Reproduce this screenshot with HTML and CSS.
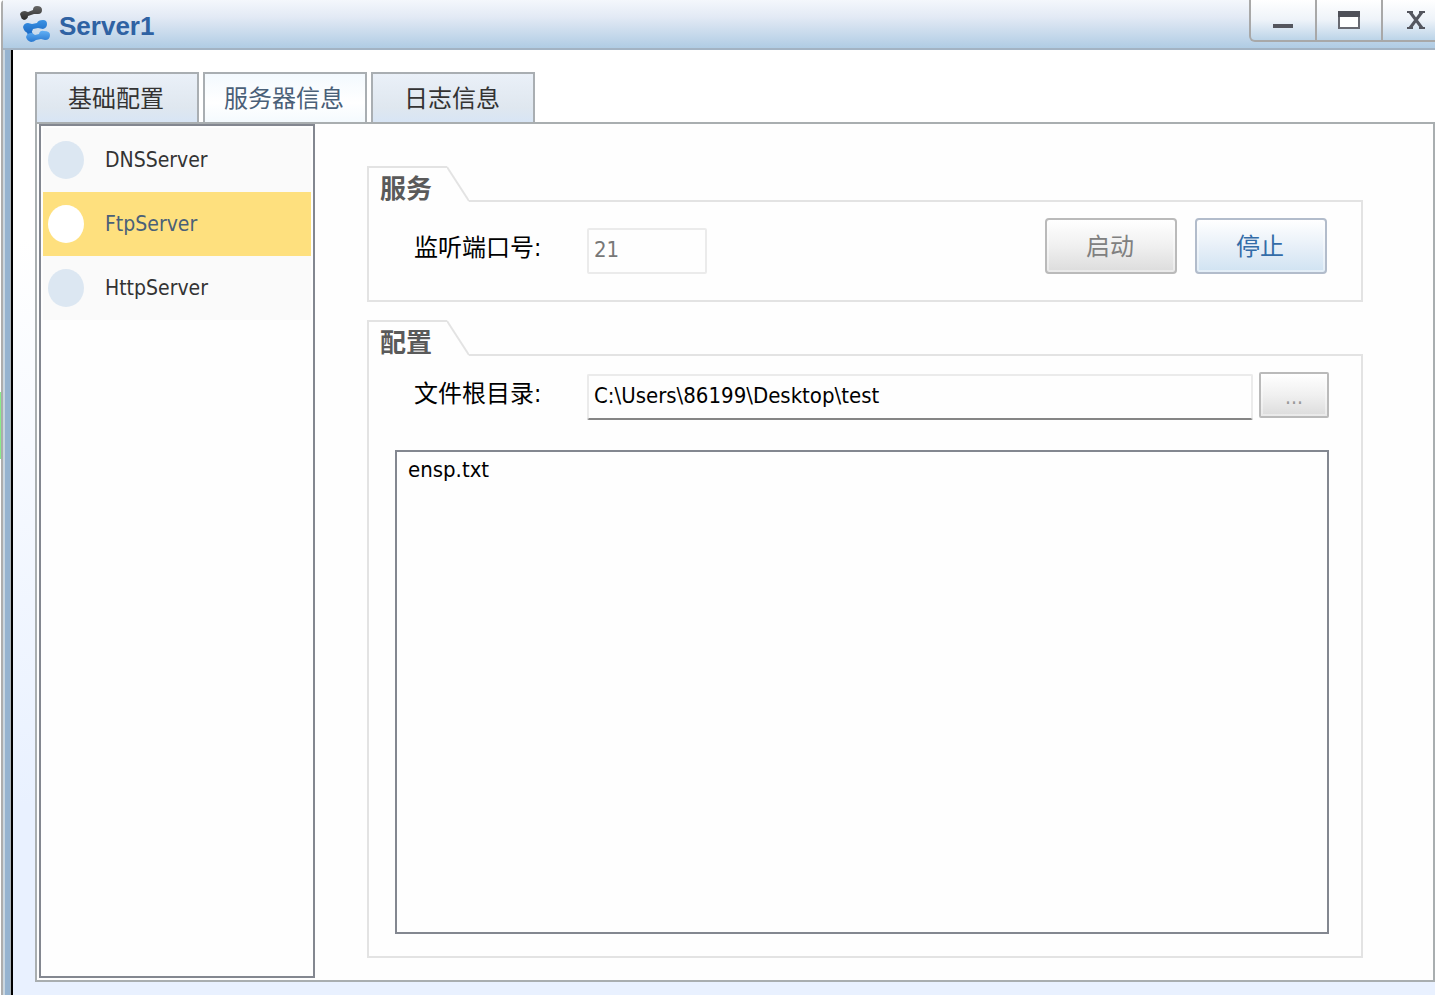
FILE: index.html
```html
<!DOCTYPE html>
<html lang="zh-CN">
<head>
<meta charset="UTF-8">
<meta name="viewport" content="width=device-width, initial-scale=1.0">
<title>Server1</title>
<link rel="stylesheet" href="styles.css">
</head>
<body>
<div class="window">
    <header class="titlebar">
        <svg class="logo" width="32" height="38" viewBox="0 0 32 38" aria-hidden="true">
            <defs>
                <linearGradient id="dark" x1="0" y1="0" x2="0" y2="1">
                    <stop offset="0" stop-color="#686868"/>
                    <stop offset="1" stop-color="#2a2a2a"/>
                </linearGradient>
                <linearGradient id="blue" x1="0" y1="0" x2="0" y2="1">
                    <stop offset="0" stop-color="#3a92e4"/>
                    <stop offset="1" stop-color="#1d6cc6"/>
                </linearGradient>
                <linearGradient id="light" x1="0" y1="0" x2="0" y2="1">
                    <stop offset="0" stop-color="#62b0f5"/>
                    <stop offset="1" stop-color="#2878d0"/>
                </linearGradient>
            </defs>
            <path d="M0 9 Q1 6 5 6 L8 7 L13 5 Q13 1 17 1 Q22 1 22 5 Q22 9 18 9 L14 9 L8 11 Q8 14 4 15 Q1 14 1 12 Z" fill="url(#dark)"/>
            <path d="M9 25 L11 33" stroke="#2273cf" stroke-width="5"/>
            <path d="M3 22 Q4 18 8 18 L12 19 L17 18 Q18 15 23 15 Q27 15 27 19 Q27 23 23 24 L18 23 L13 24 Q12 28 8 28 Q4 27 3 22 Z" fill="url(#blue)"/>
            <path d="M6 32 Q7 28 12 28 L15 30 L19 29 Q20 25 24 26 Q30 26 30 30 Q30 35 25 35 L21 34 L16 35 Q14 37 11 37 Q7 36 6 32 Z" fill="url(#light)"/>
        </svg>
        <h1 class="title">Server1</h1>
        <div class="controls">
            <button class="control" aria-label="最小化">
                <svg width="20" height="20" viewBox="0 0 20 20"><path d="M0 14h20v4H0z" fill="#54565e"/></svg>
            </button>
            <button class="control" aria-label="最大化">
                <svg width="22" height="20" viewBox="0 0 22 20"><path d="M1 5v13h20V5" fill="#fff" stroke="#686a72" stroke-width="2"/><path d="M0 1h22v6H0z" fill="#4f5058"/></svg>
            </button>
            <button class="control" aria-label="关闭">
                <svg width="18" height="20" viewBox="0 0 18 20"><path d="M0 2h6M12 2h6M0 18h6M12 18h6" stroke="#54565e" stroke-width="2"/><path d="M3 2l12 16M15 2L3 18" stroke="#54565e" stroke-width="3"/></svg>
            </button>
        </div>
    </header>

    <main class="client">
        <nav class="tabs">
            <button class="tab">基础配置</button>
            <button class="tab active">服务器信息</button>
            <button class="tab">日志信息</button>
        </nav>
        <div class="panel">
            <aside class="sidebar">
                <button class="server"><span class="dot"></span>DNSServer</button>
                <button class="server selected"><span class="dot"></span>FtpServer</button>
                <button class="server"><span class="dot"></span>HttpServer</button>
            </aside>

            <div class="content">
                <section class="group">
                    <div class="group-head">
                        <h2>服务</h2>
                        <svg width="22" height="36" viewBox="0 0 22 36"><path d="M0 1L22 35" fill="none" stroke="#e3e3e3" stroke-width="2"/></svg>
                        <span class="line"></span>
                    </div>
                    <div class="group-body">
                        <div class="row port-row">
                            <label for="port">监听端口号:</label>
                            <input type="text" id="port" class="port" value="21" disabled>
                            <div class="actions">
                                <button class="btn" disabled>启动</button>
                                <button class="btn primary">停止</button>
                            </div>
                        </div>
                    </div>
                </section>

                <section class="group grow">
                    <div class="group-head">
                        <h2>配置</h2>
                        <svg width="22" height="36" viewBox="0 0 22 36"><path d="M0 1L22 35" fill="none" stroke="#e3e3e3" stroke-width="2"/></svg>
                        <span class="line"></span>
                    </div>
                    <div class="group-body">
                        <div class="row path-row">
                            <label for="root">文件根目录:</label>
                            <input type="text" id="root" class="path" value="C:\Users\86199\Desktop\test">
                            <button class="btn browse" disabled>...</button>
                        </div>
                        <ul class="files">
                            <li>ensp.txt</li>
                        </ul>
                    </div>
                </section>
            </div>
        </div>
    </main>
</div>
</body>
</html>
```
FILE: styles.css
```css
* {
    box-sizing: border-box;
}

body {
    margin: 0;
    padding-left: 1px;
    height: 100vh;
    overflow: hidden;
    background: linear-gradient(#8aec8a, #8aec8a) 0 392px / 1px 67px no-repeat #fff;
    font-family: "DejaVu Sans Condensed", "Noto Sans CJK SC", sans-serif;
    font-size: 22px;
    color: #000;
}

button,
input {
    font: inherit;
    margin: 0;
}

h1,
h2,
ul {
    margin: 0;
    padding: 0;
}

.window {
    display: flex;
    flex-direction: column;
    height: 100%;
    border-left: 2px solid #adadad;
    border-top-left-radius: 4px;
    background: linear-gradient(90deg, #c9d6e0 2px, #95b3d0 2px, #95b3d0 7px, #a9b2b8 7px, #a9b2b8 8px, #fff 8px);
}

/* title bar */
.titlebar {
    display: flex;
    align-items: flex-start;
    flex: none;
    height: 50px;
    padding-left: 17px;
    border-bottom: 2px solid #a3b3c3;
    background: linear-gradient(#f4f7fc, #e3eaf5 35%, #b0cce4);
    overflow: hidden;
}

.logo {
    margin-top: 5px;
}

.title {
    flex: 1;
    padding-left: 7px;
    font-family: "Liberation Sans", sans-serif;
    font-size: 26px;
    line-height: 52px;
    color: #2f62a3;
}

.controls {
    display: flex;
    height: 42px;
    margin-right: -16px;
    border: 2px solid #a8a8a8;
    border-top: 0;
    border-bottom-left-radius: 6px;
    background: linear-gradient(#fff, #eef3f9 50%, #bcd4e8);
}

.control {
    display: flex;
    justify-content: center;
    align-items: center;
    width: 66px;
    padding: 0;
    border: 0;
    border-right: 2px solid #a8a8a8;
    background: none;
}

.control:last-child {
    border-right: 0;
}

/* client area */
.client {
    display: flex;
    flex-direction: column;
    flex: 1;
    min-height: 0;
    margin-left: 8px;
    padding: 22px 0 13px 22px;
    border-left: 2px solid #000;
    background: linear-gradient(#fff, #fff) 0 0 / 100% 72px no-repeat, linear-gradient(#fff 20%, #e9f1ff 80%);
}

.tabs {
    display: flex;
    gap: 4px;
}

.tab {
    width: 164px;
    height: 50px;
    padding: 0 2px 4px 0;
    border: 2px solid #a9aeb2;
    border-bottom: 0;
    background: linear-gradient(#eaf0f8, #dfe7ef 70%, #d8e5f5);
    font-size: 24px;
    color: #333;
}

.tab.active {
    background: linear-gradient(#f3f9fe, #fff 60%, #f4fafe);
    color: #4a6078;
}

.panel {
    display: flex;
    flex: 1;
    min-height: 0;
    padding: 0 2px 2px;
    border: 2px solid #a9aeb0;
    background: #fefefe;
}

.sidebar {
    flex: none;
    width: 276px;
    padding: 2px;
    border: 2px solid #838790;
    background: #fefefe;
}

.server {
    display: flex;
    align-items: center;
    gap: 21px;
    width: 100%;
    height: 64px;
    padding: 0 5px;
    border: 0;
    background: #fafafa;
    font-size: 21px;
    color: #333;
}

.server.selected {
    background: #fee07e;
    color: #4a6078;
}

.dot {
    width: 36px;
    height: 38px;
    border-radius: 50%;
    background: #dce7f2;
}

.selected .dot {
    background: #fff;
}

/* groups */
.content {
    display: flex;
    flex-direction: column;
    flex: 1;
    gap: 18px;
    padding: 42px 68px 20px 52px;
}

.group {
    display: flex;
    flex-direction: column;
}

.grow {
    flex: 1;
}

.group-head {
    display: flex;
    height: 36px;
}

.group-head h2 {
    width: 80px;
    padding-left: 11px;
    border: 2px solid #e3e3e3;
    border-width: 2px 0 0 2px;
    font-size: 26px;
    font-weight: bold;
    line-height: 42px;
    color: #5a5a5a;
}

.line {
    flex: 1;
    align-self: flex-end;
    height: 2px;
    background: #e3e3e3;
}

.group-body {
    display: flex;
    flex-direction: column;
    flex: 1;
    gap: 30px;
    padding: 16px 32px 22px 26px;
    border: 2px solid #e3e3e3;
    border-top: 0;
}

.row {
    display: flex;
    align-items: flex-end;
    height: 48px;
    padding-left: 19px;
}

.port-row {
    height: 60px;
    padding-bottom: 4px;
}

.row label {
    width: 173px;
    padding-bottom: 4px;
    font-size: 24px;
    line-height: 44px;
}

.row input {
    height: 46px;
    padding: 0 4px 4px 5px;
    border: 2px solid #ebebeb;
    border-radius: 2px;
    background: #fefefe;
    color: #000;
}

.row .port {
    width: 120px;
    color: #777;
}

.row .path {
    flex: 1;
    margin-right: 6px;
    border-bottom-color: #858585;
}

.actions {
    display: flex;
    gap: 18px;
    margin-left: auto;
    padding-right: 2px;
}

.btn {
    width: 132px;
    height: 56px;
    padding: 0 2px 4px 0;
    border: 2px solid #bababa;
    border-radius: 4px;
    box-shadow: inset 0 0 0 2px rgba(255, 255, 255, 0.4);
    background: linear-gradient(#fff, #f0f0f0 50%, #dcdcdc);
    font-size: 24px;
    color: #808080;
}

.btn.primary {
    border-color: #b2bccb;
    background: linear-gradient(#fff, #e8f0f8 50%, #d0e3f2);
    color: #336ca8;
}

.btn.browse {
    width: 70px;
    height: 46px;
    padding: 4px 0 0;
    align-self: flex-start;
    border-radius: 2px;
    font-size: 21px;
    color: #999;
}

.files {
    flex: 1;
    padding: 4px 11px;
    border: 2px solid #838790;
    background: #fefefe;
    list-style: none;
    line-height: 28px;
}
```
